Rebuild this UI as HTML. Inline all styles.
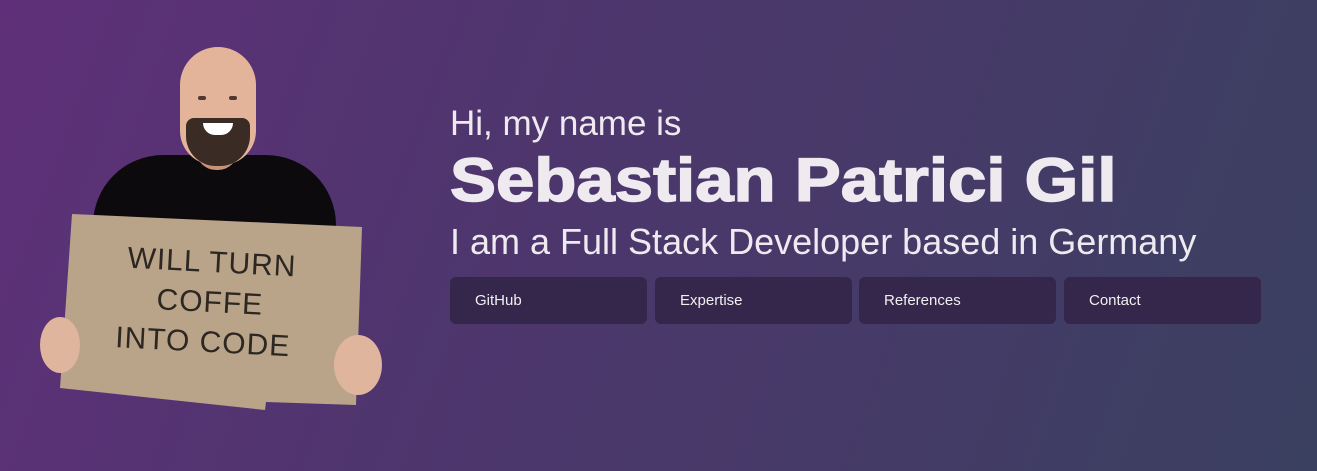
<!DOCTYPE html>
<html><head><style>
html,body{margin:0;padding:0}
body{width:1317px;height:471px;overflow:hidden;position:relative;background:linear-gradient(110deg,#5f3079 0%,#4f356e 35%,#463a68 65%,#3a4060 100%);font-family:"Liberation Sans",Arial,sans-serif;color:#eeeaf0}
.t{position:absolute;left:450px;white-space:nowrap;transform-origin:0 0}
.b{position:absolute;top:277px;width:197px;height:47px;border-radius:6px;background:#35264b;font-size:15px;line-height:47px;text-indent:25px;color:#f0f0f0}
</style></head><body>
<div style="position:absolute;left:93px;top:155px;width:243px;height:90px;background:#0c0a0d;border-radius:70px 70px 0 0"></div>
<div style="position:absolute;left:196px;top:140px;width:42px;height:30px;background:#c89478;border-radius:0 0 20px 20px"></div>
<div style="position:absolute;left:180px;top:47px;width:76px;height:118px;background:#e3b49a;border-radius:40px 40px 36px 36px"></div>
<div style="position:absolute;left:186px;top:118px;width:64px;height:48px;background:#3a2b24;border-radius:8px 8px 30px 30px"></div>
<div style="position:absolute;left:203px;top:123px;width:30px;height:12px;background:#fff;border-radius:0 0 15px 15px"></div>
<div style="position:absolute;left:198px;top:96px;width:8px;height:4px;background:#4a3a30;border-radius:3px"></div>
<div style="position:absolute;left:229px;top:96px;width:8px;height:4px;background:#4a3a30;border-radius:3px"></div>
<svg style="position:absolute;left:0;top:0" width="420" height="471">
<polygon points="72,214 362,227 356,405 266,402 265,410 60,388" fill="#b9a48a"/>
<g fill="#2d2722" font-family="'Liberation Sans',sans-serif" font-size="30" transform="rotate(3 210 300)">
<text x="210" y="272" text-anchor="middle" letter-spacing="1">WILL TURN</text>
<text x="210" y="312" text-anchor="middle" letter-spacing="1">COFFE</text>
<text x="205" y="352" text-anchor="middle" letter-spacing="1">INTO CODE</text>
</g>
<ellipse cx="60" cy="345" rx="20" ry="28" fill="#e0b59d"/>
<ellipse cx="358" cy="365" rx="24" ry="30" fill="#e0b59d"/>
</svg>
<div class="t" style="top:104px;font-size:35px">Hi, my name is</div>
<div class="t" style="top:145px;font-size:61px;font-weight:bold;transform:scaleX(1.13);-webkit-text-stroke:1.5px #eeeaf0">Sebastian Patrici Gil</div>
<div class="t" style="top:221px;font-size:36px">I am a Full Stack Developer based in Germany</div>
<div class="b" style="left:450px">GitHub</div>
<div class="b" style="left:655px">Expertise</div>
<div class="b" style="left:859px">References</div>
<div class="b" style="left:1064px">Contact</div>
</body></html>
